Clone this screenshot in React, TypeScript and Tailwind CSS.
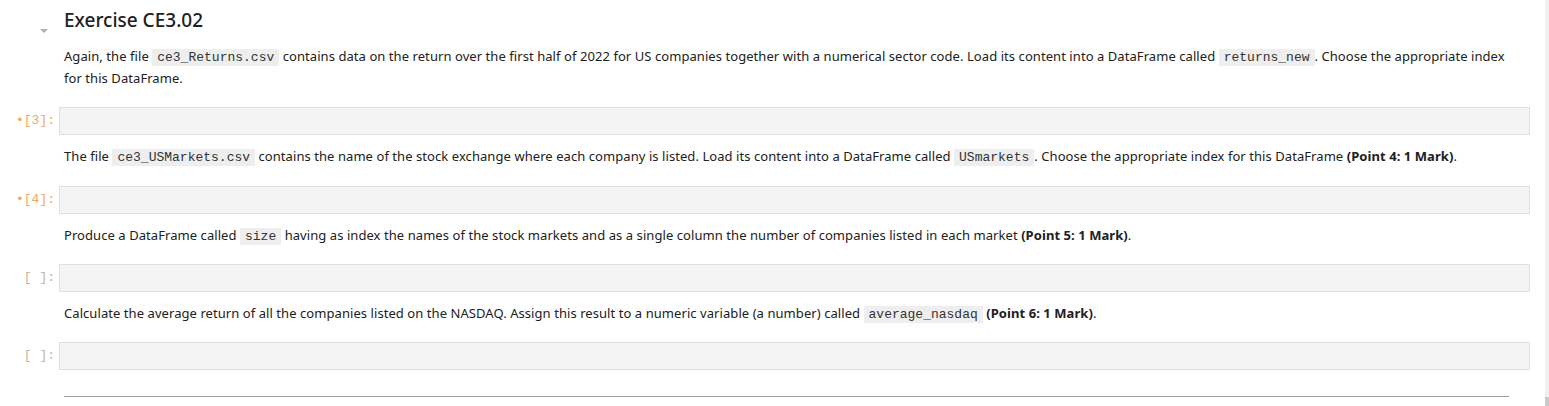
import React from "react";

const Code = ({ children }: { children: React.ReactNode }) => (
  <code className="bg-[#eeeeee] px-[5px] py-[1px] font-['Liberation_Mono',monospace] text-[13px] tracking-normal text-[#333]">
    {children}
  </code>
);

const CodeCell = ({ prompt, running }: { prompt: string; running?: boolean }) => (
  <div className="flex items-center">
    <div className="w-[59px] pr-[4px] text-right font-['Liberation_Mono',monospace] text-[13px]">
      {running ? (
        <span className="text-[#f2a766]">•[{prompt}]:</span>
      ) : (
        <span className="text-[#c8b49c]">[{prompt}]:</span>
      )}
    </div>
    <div className="h-[28px] flex-1 border border-[#e0e0e0] bg-[#f4f4f4]" />
  </div>
);

const Para = ({ children, className = "" }: { children: React.ReactNode; className?: string }) => (
  <div className={"flex " + className}>
    <div className="w-[59px]" />
    <p className="flex-1 pl-[5px] pr-[20px] text-[13px] leading-[21px] tracking-[0.005em] text-[#212121]">{children}</p>
  </div>
);

export default function App() {
  return (
    <div className="flex h-[406px] overflow-hidden bg-white font-['Noto_Sans','Open_Sans',sans-serif]">
      <div className="flex-1 pr-[15px]">
        {/* heading cell */}
        <div className="flex">
          <div className="relative w-[59px]">
            <span className="absolute left-[40px] top-[29px] h-0 w-0 border-x-[4px] border-t-[4px] border-x-transparent border-t-[#b0b0b0]" />
          </div>
          <div className="flex-1 pl-[5px] pr-[20px]">
            <h2 className="mt-[8px] text-[19px] font-medium leading-[24px] text-[#212121]">Exercise CE3.02</h2>
            <p className="mt-[14px] text-[13px] leading-[21px] tracking-[0.005em] text-[#212121]">
              Again, the file <Code>ce3_Returns.csv</Code> contains data on the return over the first half of 2022 for US
              companies together with a numerical sector code. Load its content into a DataFrame called{" "}
              <Code>returns_new</Code>. Choose the appropriate index for this DataFrame.
            </p>
          </div>
        </div>

        <div className="mt-[18px]">
          <CodeCell prompt="3" running />
        </div>

        <Para className="mt-[11px]">
          The file <Code>ce3_USMarkets.csv</Code> contains the name of the stock exchange where each company is listed.
          Load its content into a DataFrame called <Code>USmarkets</Code>. Choose the appropriate index for this DataFrame{" "}
          <b>(Point 4: 1 Mark)</b>.
        </Para>

        <div className="mt-[18px]">
          <CodeCell prompt="4" running />
        </div>

        <Para className="mt-[11px]">
          Produce a DataFrame called <Code>size</Code> having as index the names of the stock markets and as a single
          column the number of companies listed in each market <b>(Point 5: 1 Mark)</b>.
        </Para>

        <div className="mt-[17px]">
          <CodeCell prompt=" " />
        </div>

        <Para className="mt-[11px]">
          Calculate the average return of all the companies listed on the NASDAQ. Assign this result to a numeric variable
          (a number) called <Code>average_nasdaq</Code> <b>(Point 6: 1 Mark)</b>.
        </Para>

        <div className="mt-[17px]">
          <CodeCell prompt=" " />
        </div>

        <div className="flex">
          <div className="w-[59px]" />
          <div className="flex-1 pl-[5px] pr-[21px]">
            <hr className="mt-[26px] border-t border-[#9e9e9e]" />
          </div>
        </div>
      </div>
      <div className="flex w-[4px] flex-col justify-end bg-[#f0f0f0]">
        <div className="h-[9px] bg-[#c8c8c8]" />
      </div>
    </div>
  );
}
